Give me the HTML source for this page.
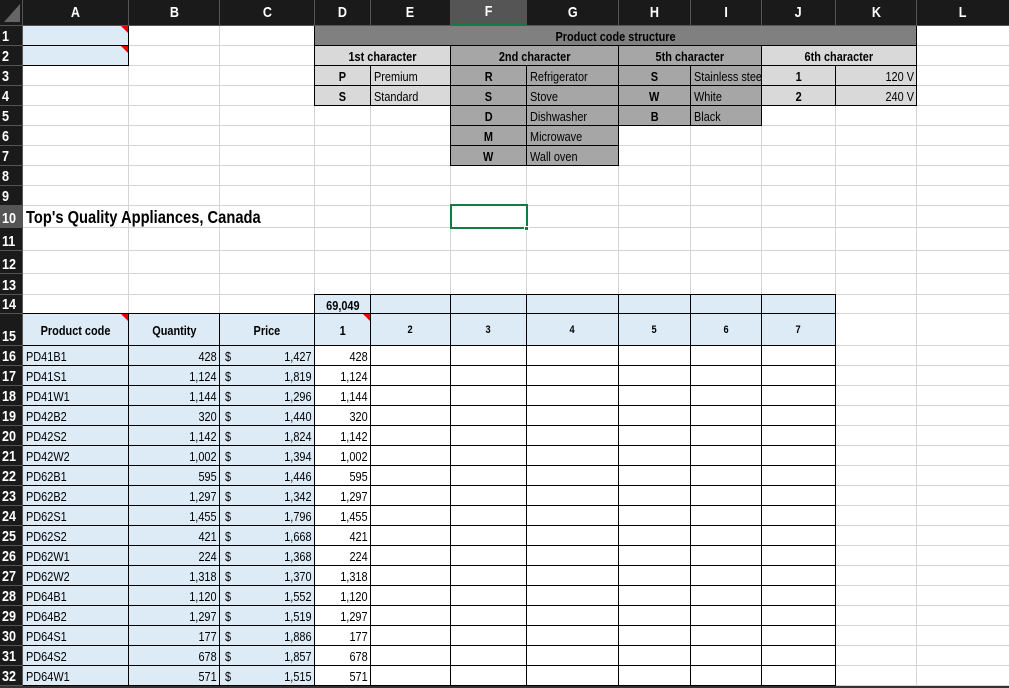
<!DOCTYPE html>
<html><head><meta charset="utf-8"><style>
html,body{margin:0;width:1009px;height:688px;overflow:hidden}
body{background:#fff;position:relative;font-family:"Liberation Sans",Arial,sans-serif;font-size:13px;color:#000}
div{position:absolute;box-sizing:border-box}
.t{white-space:nowrap;overflow:hidden;display:flex;align-items:center;padding:0 3px;line-height:1}
.t span{display:inline-block;transform:scaleX(.84)}
</style></head><body>
<script>
const C=[23,129,220,315,371,451,527,619,691,762,836,917,1010];
const R=[26,46,66,86,106,126,146,166,186,206,228,251,274,295,314,346];
for(let i=16;i<=33;i++)R.push(R[R.length-1]+20);
function el(css,txt,cls,org){const d=document.createElement('div');d.style.cssText=css;if(cls)d.className=cls;if(txt!=null){const s=document.createElement('span');s.textContent=txt;s.style.transformOrigin=org||'left center';d.appendChild(s);}document.body.appendChild(d);return d;}
for(let i=1;i<C.length-1;i++)el(`left:${C[i]-1}px;top:26px;width:1px;height:662px;background:#d4d4d4`);
for(let i=1;i<R.length;i++)el(`left:23px;top:${R[i]-1}px;width:986px;height:1px;background:#d4d4d4`);
function cell(c1,r1,c2,r2,o){o=o||{};
 const x=C[c1],y=R[r1-1],w=C[c2+1]-x,h=R[r2]-y;
 if(o.bg)el(`left:${x}px;top:${y}px;width:${w-1}px;height:${h-1}px;background:${o.bg}`);
 if(o.b)el(`left:${x-1}px;top:${y-1}px;width:${w+1}px;height:${h+1}px;border:1px solid #000`);
 if(o.t!=null){el(`left:${x}px;top:${y+1}px;width:${w-1}px;height:${h-1}px;justify-content:${o.a=='r'?'flex-end':o.a=='c'?'center':'flex-start'};font-weight:${o.w?'bold':'normal'};font-size:${o.fs||13}px;${o.a=='r'?'padding-right:2px;':''}`,o.t,'t',o.a=='r'?'right center':o.a=='c'?'center center':'left center');}
 if(o.red)el(`left:${C[c2+1]-8}px;top:${y}px;width:0;height:0;border-top:7px solid #e00;border-left:7px solid transparent`);
}
cell(0,1,0,1,{bg:'#ddebf7',b:1,red:1});cell(0,2,0,2,{bg:'#ddebf7',b:1,red:1});
cell(3,1,10,1,{bg:'#808080',b:1,t:'Product code structure',a:'c',w:1});
cell(3,2,4,2,{bg:'#d9d9d9',b:1,t:'1st character',a:'c',w:1});
cell(3,3,3,3,{bg:'#d9d9d9',b:1,t:'P',a:'c',w:1});cell(4,3,4,3,{bg:'#d9d9d9',b:1,t:'Premium'});
cell(3,4,3,4,{bg:'#d9d9d9',b:1,t:'S',a:'c',w:1});cell(4,4,4,4,{bg:'#d9d9d9',b:1,t:'Standard'});
cell(5,2,6,2,{bg:'#a6a6a6',b:1,t:'2nd character',a:'c',w:1});
[['R','Refrigerator'],['S','Stove'],['D','Dishwasher'],['M','Microwave'],['W','Wall oven']].forEach((p,i)=>{cell(5,3+i,5,3+i,{bg:'#a6a6a6',b:1,t:p[0],a:'c',w:1});cell(6,3+i,6,3+i,{bg:'#a6a6a6',b:1,t:p[1]});});
cell(7,2,8,2,{bg:'#a6a6a6',b:1,t:'5th character',a:'c',w:1});
[['S','Stainless steel'],['W','White'],['B','Black']].forEach((p,i)=>{cell(7,3+i,7,3+i,{bg:'#a6a6a6',b:1,t:p[0],a:'c',w:1});cell(8,3+i,8,3+i,{bg:'#a6a6a6',b:1,t:p[1]});});
cell(9,2,10,2,{bg:'#d9d9d9',b:1,t:'6th character',a:'c',w:1});
cell(9,3,9,3,{bg:'#d9d9d9',b:1,t:'1',a:'c',w:1});cell(10,3,10,3,{bg:'#d9d9d9',b:1,t:'120 V',a:'r'});
cell(9,4,9,4,{bg:'#d9d9d9',b:1,t:'2',a:'c',w:1});cell(10,4,10,4,{bg:'#d9d9d9',b:1,t:'240 V',a:'r'});
el(`left:23px;top:207px;width:400px;height:22px;font-weight:bold;font-size:17.5px`,"Top's Quality Appliances, Canada",'t');
el(`left:450px;top:204px;width:78px;height:25px;border:2px solid #107c41`);
el(`left:524px;top:226px;width:5px;height:5px;background:#107c41;border:1px solid #fff`);
cell(3,14,3,14,{bg:'#ddebf7',b:1,t:'69,049',a:'c',w:1});
for(let c=4;c<=9;c++)cell(c,14,c,14,{bg:'#ddebf7',b:1});
cell(0,15,0,15,{bg:'#ddebf7',b:1,t:'Product code',a:'c',w:1,red:1});
cell(1,15,1,15,{bg:'#ddebf7',b:1,t:'Quantity',a:'c',w:1});
cell(2,15,2,15,{bg:'#ddebf7',b:1,t:'Price',a:'c',w:1});
cell(3,15,3,15,{bg:'#ddebf7',b:1,t:'1',a:'c',w:1,red:1});
for(let c=4;c<=9;c++)cell(c,15,c,15,{bg:'#ddebf7',b:1,t:String(c-2),a:'c',w:1,fs:11});
const D=[['PD41B1','428','1,427'],['PD41S1','1,124','1,819'],['PD41W1','1,144','1,296'],['PD42B2','320','1,440'],['PD42S2','1,142','1,824'],['PD42W2','1,002','1,394'],['PD62B1','595','1,446'],['PD62B2','1,297','1,342'],['PD62S1','1,455','1,796'],['PD62S2','421','1,668'],['PD62W1','224','1,368'],['PD62W2','1,318','1,370'],['PD64B1','1,120','1,552'],['PD64B2','1,297','1,519'],['PD64S1','177','1,886'],['PD64S2','678','1,857'],['PD64W1','571','1,515']];
D.forEach((d,i)=>{const r=16+i;
 cell(0,r,0,r,{bg:'#ddebf7',b:1,t:d[0]});
 cell(1,r,1,r,{bg:'#ddebf7',b:1,t:d[1],a:'r'});
 cell(2,r,2,r,{bg:'#ddebf7',b:1,t:d[2],a:'r'});
 el(`left:220px;top:${R[r-1]+1}px;width:20px;height:19px;padding-left:5px`,'$','t');
 cell(3,r,3,r,{b:1,t:d[1],a:'r'});
 for(let c=4;c<=9;c++)cell(c,r,c,r,{b:1});
});
el(`left:0;top:0;width:1009px;height:26px;background:#1a1a1a`);
el(`left:0;top:25px;width:1009px;height:1px;background:#555`);
el(`left:4px;top:4px;width:0;height:0;border-bottom:18px solid #666;border-left:16px solid transparent`);
const L='ABCDEFGHIJKL';
for(let i=0;i<12;i++){
 const x=C[i],w=C[i+1]-x;
 el(`left:${x-1}px;top:0;width:1px;height:25px;background:#555`);
 el(`left:${x}px;top:0;width:${w-1}px;height:25px;color:#fff;font-size:15px;font-weight:bold;justify-content:center;${i==5?'background:#555;border-bottom:2px solid #107c41;':''}`,L[i],'t','center center');
}
el(`left:0;top:26px;width:23px;height:662px;background:#1a1a1a`);
for(let i=0;i<R.length-1;i++){
 const y=R[i],h=R[i+1]-y;
 el(`left:0;top:${y-1}px;width:23px;height:1px;background:#555`);
 el(`left:0;top:${y}px;width:22px;height:${h-1}px;color:#fff;font-weight:bold;font-size:15px;padding:0 0 0 2px;align-items:flex-end;padding-bottom:1px;${i==9?'background:#555;':''}`,String(i+1),'t');
}
el(`left:22px;top:26px;width:1px;height:662px;background:#555`);
el(`left:0;top:686px;width:1009px;height:2px;background:#333`);
</script>
</body></html>
